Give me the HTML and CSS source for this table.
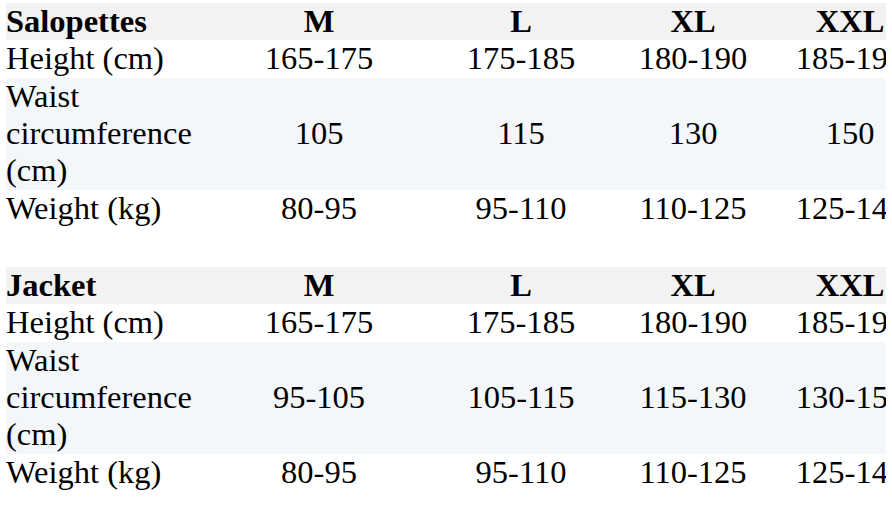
FILE: index.html
```html
<!DOCTYPE html>
<html>
<head>
<meta charset="utf-8">
<link rel="stylesheet" href="styles.css">
</head>
<body>
<div class="wrap">
  <table class="sizes">
    <colgroup><col class="c1"><col class="c2"><col class="c3"><col class="c4"><col class="c5"></colgroup>
    <tr class="head"><th class="label">Salopettes</th><th>M</th><th>L</th><th>XL</th><th>XXL</th></tr>
    <tr><td class="label">Height (cm)</td><td>165-175</td><td>175-185</td><td>180-190</td><td>185-190</td></tr>
    <tr class="alt"><td class="label">Waist circumference (cm)</td><td>105</td><td>115</td><td>130</td><td>150</td></tr>
    <tr><td class="label">Weight (kg)</td><td>80-95</td><td>95-110</td><td>110-125</td><td>125-140</td></tr>
  </table>
  <table class="sizes second">
    <colgroup><col class="c1"><col class="c2"><col class="c3"><col class="c4"><col class="c5"></colgroup>
    <tr class="head"><th class="label">Jacket</th><th>M</th><th>L</th><th>XL</th><th>XXL</th></tr>
    <tr><td class="label">Height (cm)</td><td>165-175</td><td>175-185</td><td>180-190</td><td>185-190</td></tr>
    <tr class="alt"><td class="label">Waist circumference (cm)</td><td>95-105</td><td>105-115</td><td>115-130</td><td>130-150</td></tr>
    <tr><td class="label">Weight (kg)</td><td>80-95</td><td>95-110</td><td>110-125</td><td>125-140</td></tr>
  </table>
</div>
</body>
</html>
```
FILE: styles.css
```css
html, body {
  margin: 0;
  padding: 0;
  background: #ffffff;
}
body {
  padding: 3px 0 0 6px;
  font-family: "Liberation Serif", "DejaVu Serif", serif;
  font-size: 32.5px;
  color: #000;
}
.wrap {
  width: 880px;
  overflow: hidden;
}
.sizes {
  border-collapse: collapse;
  table-layout: fixed;
  width: 932px;
  line-height: 37.33px;
  font-family: "Liberation Serif", "DejaVu Serif", serif;
}
.sizes.second {
  margin-top: 40px;
}
.c1 { width: 214px; }
.c2 { width: 198px; }
.c3 { width: 206px; }
.c4 { width: 138px; }
.c5 { width: 176px; }
.sizes th, .sizes td {
  padding: 0;
  text-align: center;
  vertical-align: middle;
  white-space: nowrap;
}
.sizes .label {
  text-align: left;
  white-space: normal;
}
.sizes th {
  font-weight: bold;
}
.head {
  background: #f2f2f2;
}
.alt {
  background: #f3f7fa;
}
```
